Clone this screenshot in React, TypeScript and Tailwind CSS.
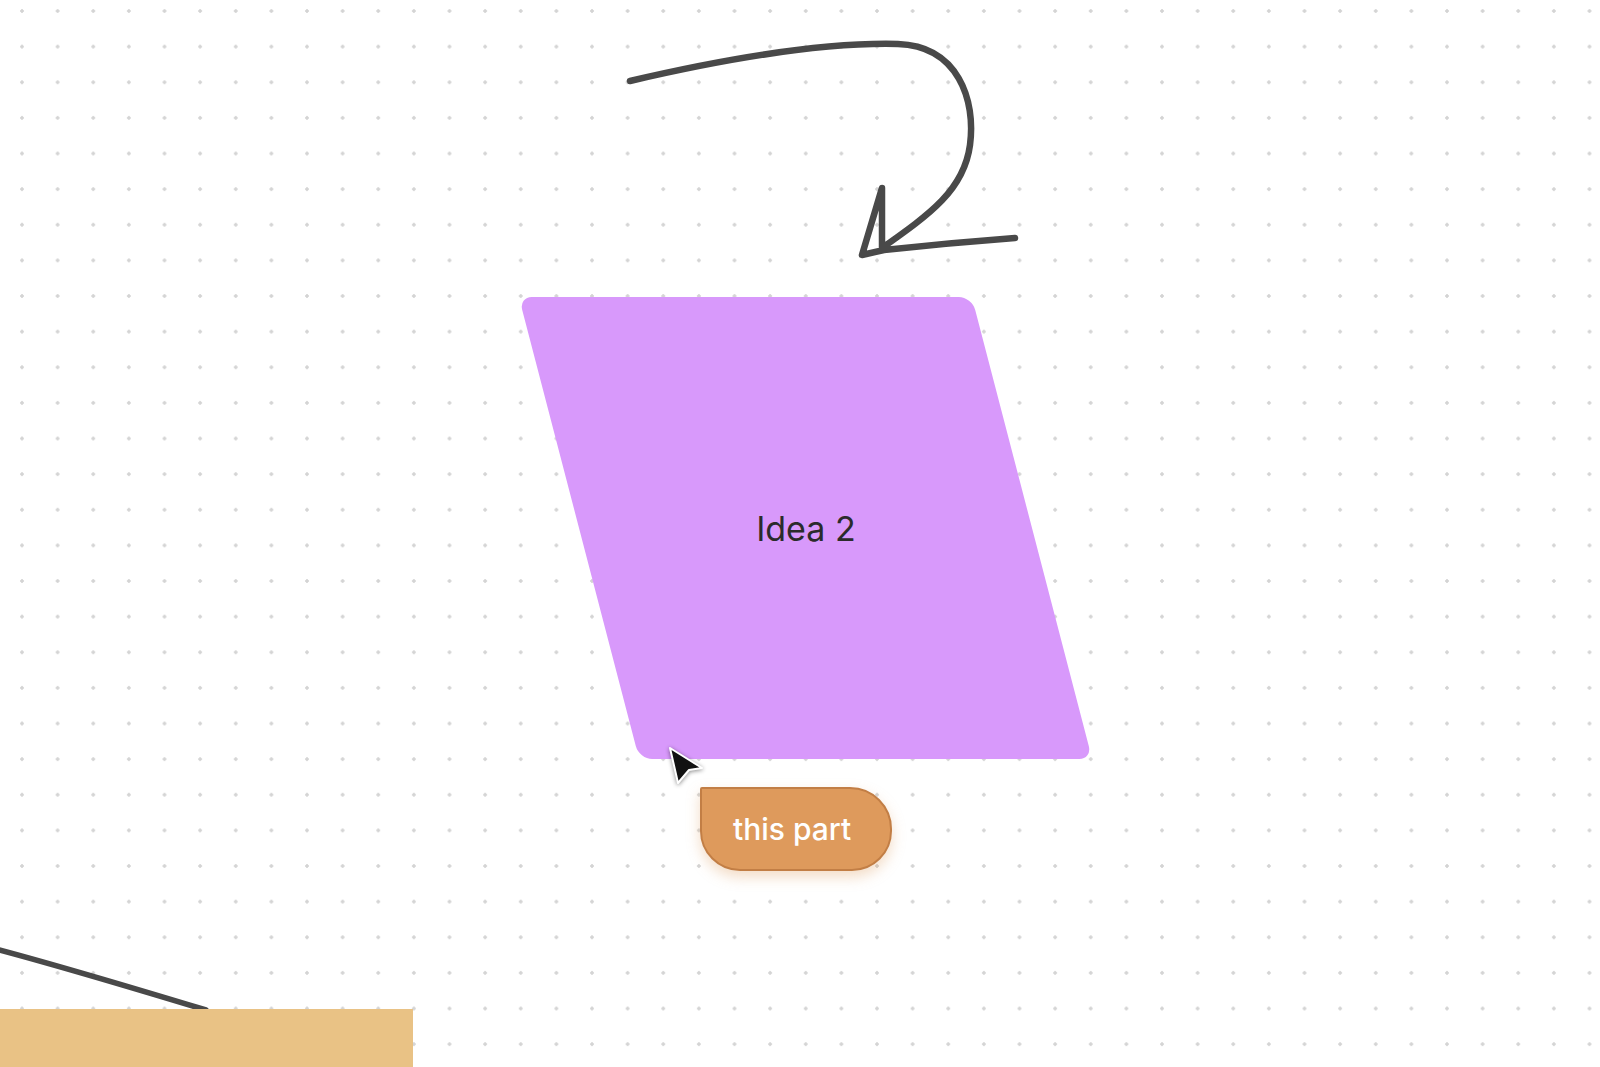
import React from 'react'

export default function App() {
  return (
    <div className="relative h-[1067px] w-[1600px] overflow-hidden bg-white bg-[radial-gradient(circle,#d4d4d4_1.5px,transparent_1.9px)] bg-[length:35.64px_35.64px] bg-[position:4.2px_-6.8px] font-['Inter','Noto_Sans',sans-serif]">
      {/* Hand-drawn strokes */}
      <svg className="absolute inset-0" width="1600" height="1067" viewBox="0 0 1600 1067" fill="none">
        <path
          d="M630 81 C720 60 820 42 898 44 C958 46 976 100 970 145 C964 190 930 214 882 248 L882 188 L862 255 L884 250 C930 245 975 241 1015 238"
          stroke="#494949"
          strokeWidth="6.5"
          strokeLinecap="round"
          strokeLinejoin="round"
        />
        <path d="M-4 949 C60 966 140 990 206 1010" stroke="#494949" strokeWidth="5.5" strokeLinecap="round" />
      </svg>

      {/* Bottom-left node */}
      <div className="absolute left-0 top-[1009px] h-[70px] w-[413px] bg-[#E9C285]" />

      {/* Parallelogram node */}
      <div className="absolute left-[579px] top-[297px] flex h-[462px] w-[453px] skew-x-[14.6deg] items-center justify-center rounded-[13px] bg-[#D899FB]">
        <span className="-skew-x-[14.6deg] text-[34px] text-[#2b2b2b]">Idea 2</span>
      </div>

      {/* Cursor */}
      <svg className="absolute left-[664px] top-[742px] drop-shadow-[0_1px_2px_rgba(0,0,0,0.45)]" width="46" height="48" viewBox="664 742 46 48">
        <path d="M670 748 L702 768 L689 770 L678 783 Z" fill="#111" stroke="#fff" strokeWidth="2" strokeLinejoin="round" />
      </svg>

      {/* Label tag */}
      <div className="absolute left-[700px] top-[787px] flex h-[84px] w-[192px] items-center justify-center rounded-tl-[2px] rounded-tr-[42px] rounded-b-[40px] border-2 border-[#C27E45] bg-[#DE9A5C] pr-[8px] shadow-[0_6px_14px_rgba(222,154,92,0.35)]">
        <span className="text-[30px] font-medium text-white">this part</span>
      </div>
    </div>
  )
}
